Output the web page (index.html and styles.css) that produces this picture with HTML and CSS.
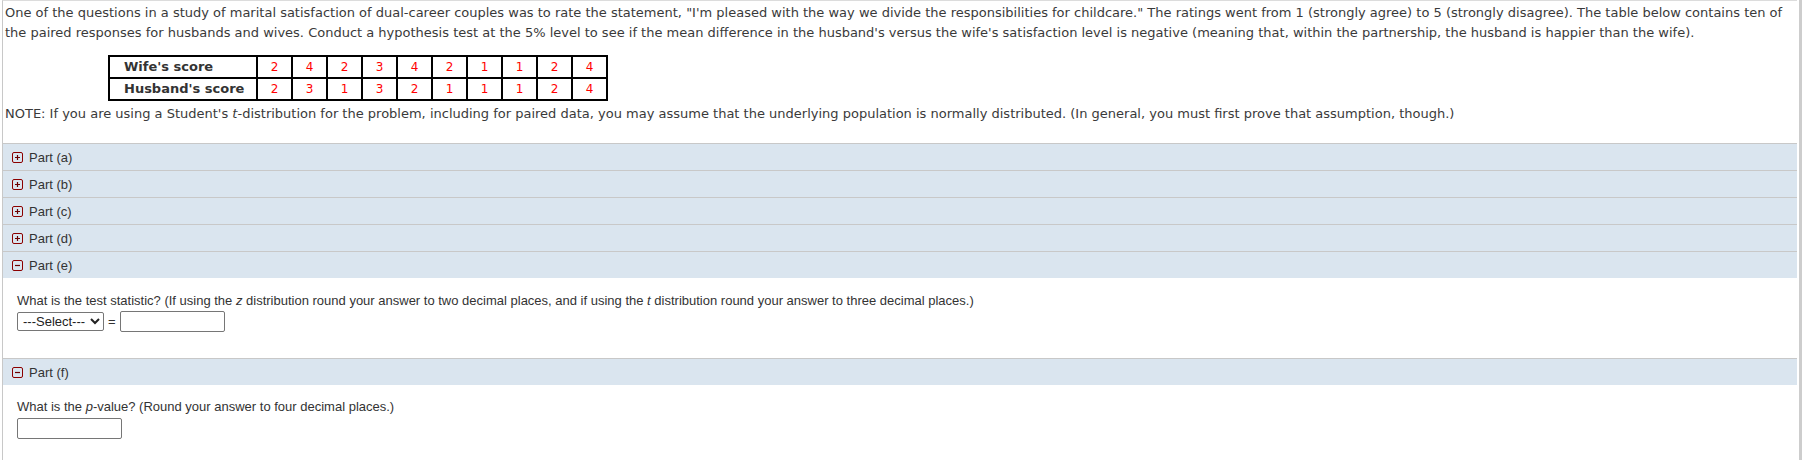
FILE: index.html
```html
<!DOCTYPE html>
<html lang="en">
<head>
<meta charset="utf-8">
<title>Paired data hypothesis test</title>
<link rel="stylesheet" href="styles.css">
</head>
<body>
<div class="frame">
  <p class="intro">One of the questions in a study of marital satisfaction of dual-career couples was to rate the statement, "I'm pleased with the way we divide the responsibilities for childcare." The ratings went from 1 (strongly agree) to 5 (strongly disagree). The table below contains ten of the paired responses for husbands and wives. Conduct a hypothesis test at the 5% level to see if the mean difference in the husband's versus the wife's satisfaction level is negative (meaning that, within the partnership, the husband is happier than the wife).</p>
  <table class="scores">
    <tr>
      <th>Wife's score</th>
      <td>2</td><td>4</td><td>2</td><td>3</td><td>4</td><td>2</td><td>1</td><td>1</td><td>2</td><td>4</td>
    </tr>
    <tr>
      <th>Husband's score</th>
      <td>2</td><td>3</td><td>1</td><td>3</td><td>2</td><td>1</td><td>1</td><td>1</td><td>2</td><td>4</td>
    </tr>
  </table>
  <p class="note">NOTE: If you are using a Student's <i>t</i>-distribution for the problem, including for paired data, you may assume that the underlying population is normally distributed. (In general, you must first prove that assumption, though.)</p>

  <div class="parts">
    <div class="part-head"><svg class="toggle" viewBox="0 0 11 11" width="11" height="11"><rect x="0.5" y="0.5" width="10" height="10" rx="1.5"/><path d="M3 5.5h5M5.5 3v5"/></svg><span>Part (a)</span></div>
    <div class="part-head"><svg class="toggle" viewBox="0 0 11 11" width="11" height="11"><rect x="0.5" y="0.5" width="10" height="10" rx="1.5"/><path d="M3 5.5h5M5.5 3v5"/></svg><span>Part (b)</span></div>
    <div class="part-head"><svg class="toggle" viewBox="0 0 11 11" width="11" height="11"><rect x="0.5" y="0.5" width="10" height="10" rx="1.5"/><path d="M3 5.5h5M5.5 3v5"/></svg><span>Part (c)</span></div>
    <div class="part-head"><svg class="toggle" viewBox="0 0 11 11" width="11" height="11"><rect x="0.5" y="0.5" width="10" height="10" rx="1.5"/><path d="M3 5.5h5M5.5 3v5"/></svg><span>Part (d)</span></div>
    <div class="part-head"><svg class="toggle" viewBox="0 0 11 11" width="11" height="11"><rect x="0.5" y="0.5" width="10" height="10" rx="1.5"/><path d="M3 5.5h5"/></svg><span>Part (e)</span></div>
    <div class="part-body part-e">
      <p class="question">What is the test statistic? (If using the <i>z</i> distribution round your answer to two decimal places, and if using the <i>t</i> distribution round your answer to three decimal places.)</p>
      <div class="controls">
        <select class="dist"><option>---Select---</option><option>z</option><option>t</option></select>
        <span class="eq">=</span>
        <input class="answer" type="text">
      </div>
    </div>
    <div class="part-head"><svg class="toggle" viewBox="0 0 11 11" width="11" height="11"><rect x="0.5" y="0.5" width="10" height="10" rx="1.5"/><path d="M3 5.5h5"/></svg><span>Part (f)</span></div>
    <div class="part-body part-f">
      <p class="question">What is the <i>p</i>-value? (Round your answer to four decimal places.)</p>
      <div class="controls">
        <input class="answer" type="text">
      </div>
    </div>
  </div>
</div>
<div class="rail"></div>
</body>
</html>
```

FILE: styles.css
```css
html, body {
  margin: 0;
  padding: 0;
  background: #fff;
}

body {
  display: flex;
  min-height: 460px;
  overflow: hidden;
}

.frame {
  flex: 0 0 1794px;
  margin-left: 2px;
  border-left: 1px solid #c8c8c8;
  border-top: 1px solid #dcdcdc;
  min-height: 459px;
}

.rail {
  flex: 0 0 3px;
  margin-left: 2px;
  background: #cdcdcd;
}

.intro, .note {
  margin: 0;
  padding: 2px 0 0 2px;
  font-family: "DejaVu Sans", Verdana, sans-serif;
  font-size: 13px;
  line-height: 20px;
  color: #3a3a3a;
}

.note {
  padding-top: 0;
  margin-top: 3px;
}

.scores {
  margin: 12px 0 0 105px;
  border-collapse: collapse;
  font-family: "DejaVu Sans", Verdana, sans-serif;
  font-size: 13px;
  line-height: 20px;
}

.scores th, .scores td {
  border: 2px solid #000;
  padding: 0;
}

.scores th {
  width: 132px;
  padding-left: 14px;
  text-align: left;
  font-weight: bold;
  color: #333;
}

.scores td {
  width: 33px;
  text-align: center;
  color: #f00;
  font-size: 12px;
}

.parts {
  margin-top: 19px;
  font-family: "Liberation Sans", Arial, sans-serif;
  font-size: 13px;
  color: #333;
}

.part-head {
  display: flex;
  align-items: center;
  gap: 6px;
  height: 26px;
  padding-left: 9px;
  border-top: 1px solid #c8c8c8;
  background: #dae5ef;
}

.toggle {
  display: block;
  fill: none;
  stroke: #8b0000;
  stroke-width: 1;
}

.toggle path {
  stroke: #6b0000;
  stroke-width: 1.2;
}

.part-body {
  padding: 15px 14px 26px;
}

.part-f {
  padding-top: 14px;
}

.question {
  margin: 0;
  line-height: 16px;
}

.controls {
  display: flex;
  align-items: center;
  gap: 4px;
  margin-top: 2px;
  height: 21px;
}

.part-f .controls {
  margin-top: 3px;
}

.dist {
  box-sizing: border-box;
  width: 87px;
  height: 19px;
  font-family: "Liberation Sans", Arial, sans-serif;
  font-size: 13px;
  color: #222;
  border: 1px solid #767676;
  border-radius: 2px;
  background: #fff;
  padding: 0 0 0 1px;
}

.eq {
  color: #333;
}

.answer {
  box-sizing: border-box;
  width: 105px;
  height: 21px;
  margin: 0;
  border: 1px solid #767676;
  border-radius: 2px;
  padding: 1px 2px;
  font-family: "Liberation Sans", Arial, sans-serif;
  font-size: 13px;
}
```
